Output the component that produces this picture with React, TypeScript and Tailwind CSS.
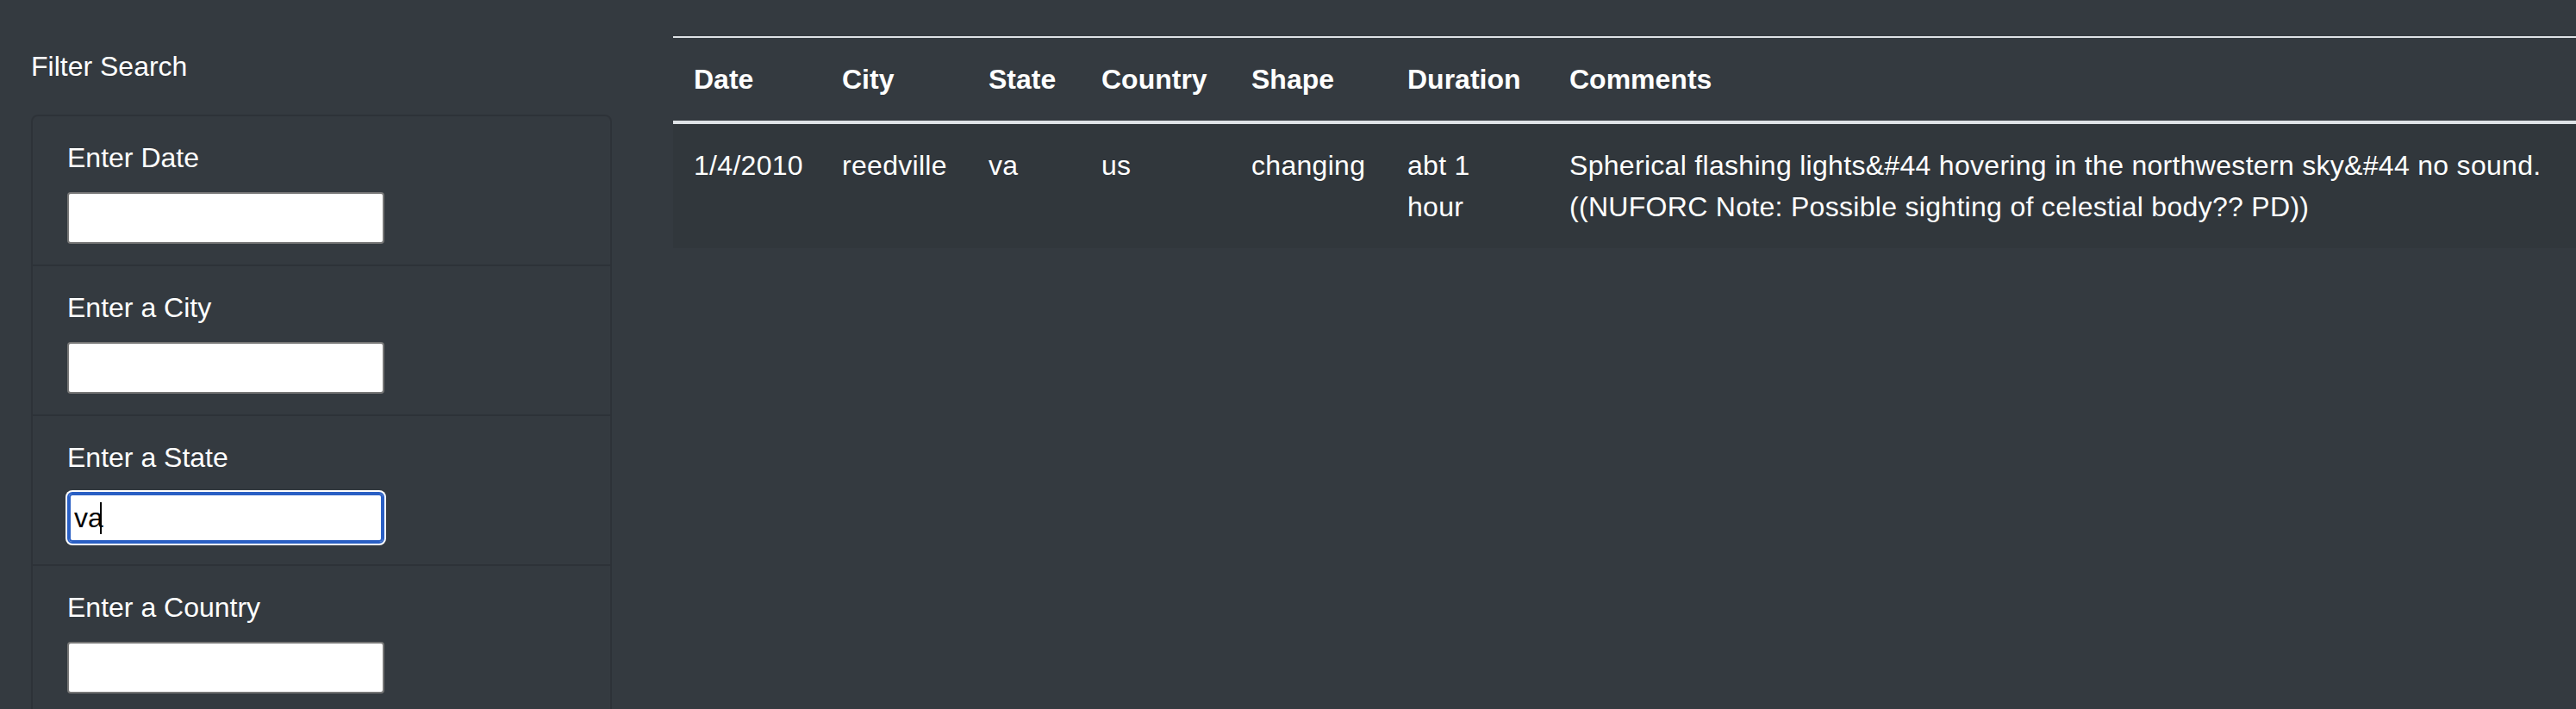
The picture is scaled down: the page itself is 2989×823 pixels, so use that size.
import React from "react";

type Sighting = {
    date: string;
    city: string;
    state: string;
    country: string;
    shape: string;
    duration: string[];
    comments: string[];
};

const rows: Sighting[] = [
    {
        date: "1/4/2010",
        city: "reedville",
        state: "va",
        country: "us",
        shape: "changing",
        duration: ["abt 1", "hour"],
        comments: [
            "Spherical flashing lights&#44 hovering in the northwestern sky&#44 no sound.",
            "((NUFORC Note: Possible sighting of celestial body?? PD))",
        ],
    },
];

const filters = [
    { id: "datetime", label: "Enter Date", value: "" },
    { id: "city", label: "Enter a City", value: "" },
    { id: "state", label: "Enter a State", value: "va", focused: true },
    { id: "country", label: "Enter a Country", value: "" },
];

const FilterItem = ({
    id,
    label,
    value,
    focused,
    first,
}: {
    id: string;
    label: string;
    value: string;
    focused?: boolean;
    first?: boolean;
}) => (
    <li
        className={`px-[40px] pt-[24px] pb-[24px] ${
            first ? "" : "border-t-2 border-[rgba(0,0,0,0.125)]"
        }`}
    >
        <label htmlFor={id} className="block text-[32px] leading-[48px] mb-[16px]">
            {label}
        </label>
        <div className="relative w-[368px]">
            <input
                id={id}
                type="text"
                readOnly
                value={value}
                className={`block w-[368px] h-[60px] bg-white text-black text-[32px] pl-[6px] outline-none ${
                    focused
                        ? "border-2 border-[#2a5fc4] rounded-[6px] shadow-[inset_0_0_0_2px_#2a5fc4,0_0_0_2px_#ffffff]"
                        : "border-2 border-[#767676] rounded-[4px]"
                }`}
            />
            {/* caret in the focused field */}
            {focused && (
                <span className="absolute left-[38px] top-[12px] w-[2px] h-[37px] bg-black" />
            )}
        </div>
    </li>
);

export default function App() {
    return (
        <div className="min-h-screen bg-[#343a40] text-white font-['Liberation_Sans',Arial,sans-serif] flex">
            {/* Sidebar */}
            <aside className="w-[674px] shrink-0 ml-[36px]">
                <h5 className="text-[32px] leading-[48px] mt-[53px] mb-[32px]">Filter Search</h5>
                <ul className="border-2 border-[rgba(0,0,0,0.125)] rounded-[8px] min-h-[720px]">
                    {filters.map((f, i) => (
                        <FilterItem key={f.id} {...f} first={i === 0} />
                    ))}
                </ul>
            </aside>

            {/* Results table */}
            <main className="flex-1 min-w-0 ml-[71px] pt-[42px]">
                <table className="w-full table-fixed border-collapse text-[32px] leading-[48px]">
                    <colgroup>
                        <col className="w-[172px]" />
                        <col className="w-[170px]" />
                        <col className="w-[131px]" />
                        <col className="w-[174px]" />
                        <col className="w-[181px]" />
                        <col className="w-[188px]" />
                        <col />
                    </colgroup>
                    <thead>
                        <tr className="border-t-2 border-b-4 border-[#dee2e6]">
                            {["Date", "City", "State", "Country", "Shape", "Duration", "Comments"].map(
                                (h) => (
                                    <th key={h} className="p-[24px] text-left font-bold align-bottom">
                                        {h}
                                    </th>
                                )
                            )}
                        </tr>
                    </thead>
                    <tbody>
                        {rows.map((r, i) => (
                            <tr key={i} className="bg-[rgba(0,0,0,0.05)] tracking-[0.3px]">
                                <td className="p-[24px] align-top">{r.date}</td>
                                <td className="p-[24px] align-top">{r.city}</td>
                                <td className="p-[24px] align-top">{r.state}</td>
                                <td className="p-[24px] align-top">{r.country}</td>
                                <td className="p-[24px] align-top">{r.shape}</td>
                                <td className="p-[24px] align-top">
                                    {r.duration.map((d) => (
                                        <span key={d} className="block whitespace-nowrap">
                                            {d}
                                        </span>
                                    ))}
                                </td>
                                <td className="p-[24px] align-top">
                                    {r.comments.map((c) => (
                                        <span key={c} className="block whitespace-nowrap">
                                            {c}
                                        </span>
                                    ))}
                                </td>
                            </tr>
                        ))}
                    </tbody>
                </table>
            </main>
        </div>
    );
}
